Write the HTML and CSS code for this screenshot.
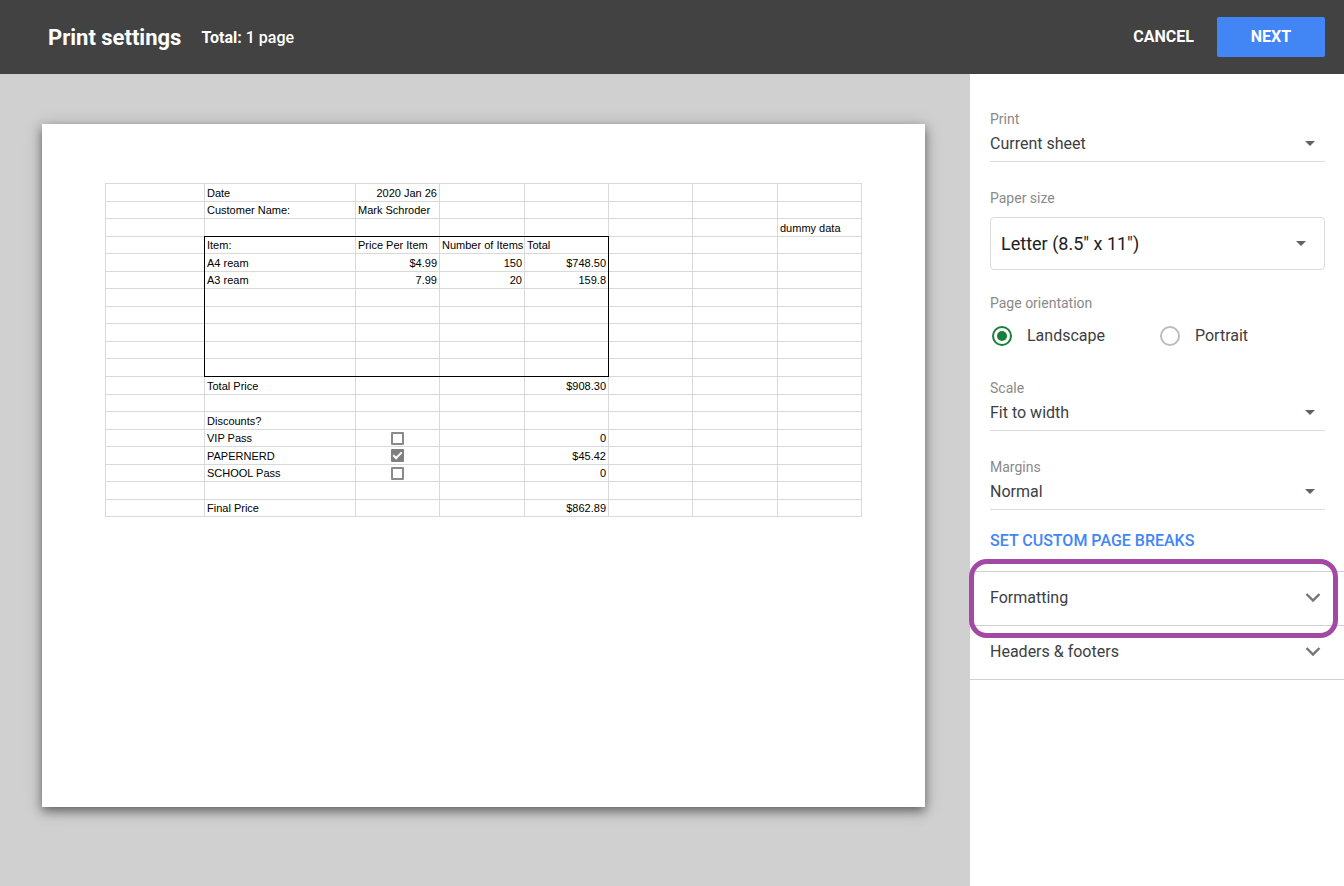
FILE: index.html
```html
<!DOCTYPE html>
<html lang="en">
<head>
    <meta charset="UTF-8">
    <meta name="viewport" content="width=device-width, initial-scale=1.0">
    <title>Print settings</title>
    <link rel="stylesheet" href="styles.css">
</head>
<body>
    <header class="topbar">
        <h1>Print settings</h1>
        <p class="total"><strong>Total:</strong> 1 page</p>
        <div class="actions">
            <button type="button" class="btn btn-cancel">CANCEL</button>
            <button type="button" class="btn btn-next">NEXT</button>
        </div>
    </header>

    <div class="layout">
        <main class="preview">
            <div class="paper">
                <table class="sheet">
                    <colgroup>
                        <col class="col-a">
                        <col class="col-b">
                        <col class="col-c">
                        <col class="col-d">
                        <col class="col-c">
                        <col class="col-c">
                        <col class="col-d">
                        <col class="col-c">
                    </colgroup>
                    <tbody class="order">
                        <tr><td></td><td>Date</td><td class="num">2020 Jan 26</td><td></td><td></td><td></td><td></td><td></td></tr>
                        <tr><td></td><td>Customer Name:</td><td>Mark Schroder</td><td></td><td></td><td></td><td></td><td></td></tr>
                        <tr><td></td><td></td><td></td><td></td><td></td><td></td><td></td><td>dummy data</td></tr>
                        <tr><td></td><td>Item:</td><td>Price Per Item</td><td>Number of Items</td><td>Total</td><td></td><td></td><td></td></tr>
                        <tr><td></td><td>A4 ream</td><td class="num">$4.99</td><td class="num">150</td><td class="num">$748.50</td><td></td><td></td><td></td></tr>
                        <tr><td></td><td>A3 ream</td><td class="num">7.99</td><td class="num">20</td><td class="num">159.8</td><td></td><td></td><td></td></tr>
                        <tr><td></td><td></td><td></td><td></td><td></td><td></td><td></td><td></td></tr>
                        <tr><td></td><td></td><td></td><td></td><td></td><td></td><td></td><td></td></tr>
                        <tr><td></td><td></td><td></td><td></td><td></td><td></td><td></td><td></td></tr>
                        <tr><td></td><td></td><td></td><td></td><td></td><td></td><td></td><td></td></tr>
                        <tr><td></td><td></td><td></td><td></td><td></td><td></td><td></td><td></td></tr>
                    </tbody>
                    <tbody>
                        <tr><td></td><td>Total Price</td><td></td><td></td><td class="num">$908.30</td><td></td><td></td><td></td></tr>
                        <tr><td></td><td></td><td></td><td></td><td></td><td></td><td></td><td></td></tr>
                        <tr><td></td><td>Discounts?</td><td></td><td></td><td></td><td></td><td></td><td></td></tr>
                        <tr><td></td><td><label for="vip">VIP Pass</label></td><td class="check"><input type="checkbox" id="vip"></td><td></td><td class="num">0</td><td></td><td></td><td></td></tr>
                        <tr><td></td><td><label for="papernerd">PAPERNERD</label></td><td class="check"><input type="checkbox" id="papernerd" checked></td><td></td><td class="num">$45.42</td><td></td><td></td><td></td></tr>
                        <tr><td></td><td><label for="school">SCHOOL Pass</label></td><td class="check"><input type="checkbox" id="school"></td><td></td><td class="num">0</td><td></td><td></td><td></td></tr>
                        <tr><td></td><td></td><td></td><td></td><td></td><td></td><td></td><td></td></tr>
                        <tr><td></td><td>Final Price</td><td></td><td></td><td class="num">$862.89</td><td></td><td></td><td></td></tr>
                    </tbody>
                </table>
            </div>
        </main>

        <aside class="sidebar">
            <form class="settings">
                <div class="field">
                    <label class="field-label" for="print">Print</label>
                    <div class="select">
                        <select id="print"><option>Current sheet</option></select>
                    </div>
                </div>

                <div class="field">
                    <label class="field-label" for="paper-size">Paper size</label>
                    <div class="select select-boxed">
                        <select id="paper-size"><option>Letter (8.5" x 11")</option></select>
                    </div>
                </div>

                <fieldset class="field orientation">
                    <legend class="field-label">Page orientation</legend>
                    <div class="radios">
                        <label class="radio"><input type="radio" name="orientation" value="landscape" checked><span>Landscape</span></label>
                        <label class="radio"><input type="radio" name="orientation" value="portrait"><span>Portrait</span></label>
                    </div>
                </fieldset>

                <div class="field">
                    <label class="field-label" for="scale">Scale</label>
                    <div class="select">
                        <select id="scale"><option>Fit to width</option></select>
                    </div>
                </div>

                <div class="field">
                    <label class="field-label" for="margins">Margins</label>
                    <div class="select">
                        <select id="margins"><option>Normal</option></select>
                    </div>
                </div>

                <a class="breaks" href="#">SET CUSTOM PAGE BREAKS</a>
            </form>

            <div class="sections">
                <button type="button" class="section highlighted">
                    Formatting
                    <svg class="chevron" width="16" height="10" viewBox="0 0 16 10"><path d="M1.5 1L8 7.5L14.5 1" fill="none" stroke="#757575" stroke-width="2.4"/></svg>
                </button>
                <button type="button" class="section">
                    Headers &amp; footers
                    <svg class="chevron" width="16" height="10" viewBox="0 0 16 10"><path d="M1.5 1L8 7.5L14.5 1" fill="none" stroke="#757575" stroke-width="2.4"/></svg>
                </button>
            </div>
        </aside>
    </div>
</body>
</html>
```
FILE: styles.css
```css
* {
    box-sizing: border-box;
}

body {
    margin: 0;
    min-height: 100vh;
    display: flex;
    flex-direction: column;
    font-family: Roboto, Arial, sans-serif;
    font-size: 16px;
    color: #3c4043;
}

button, select {
    font: inherit;
    color: inherit;
    border: 0;
    background: none;
    cursor: pointer;
}

/* Top bar */
.topbar {
    display: flex;
    align-items: center;
    height: 74px;
    padding: 0 19px 0 48px;
    background-color: #424242;
    color: #fff;
}

.topbar h1 {
    margin: 0;
    font-size: 22px;
    font-weight: 700;
}

.total {
    margin: 0 0 0 20px;
    font-weight: 500;
}

.total strong {
    font-weight: 700;
}

.actions {
    display: flex;
    margin-left: auto;
}

.btn {
    height: 40px;
    padding: 0 23px 2px;
    font-weight: 700;
    border-radius: 2px;
}

.btn-next {
    width: 108px;
    background-color: #4285f4;
}

.layout {
    flex: 1;
    display: grid;
    grid-template-columns: 1fr 374px;
}

/* Page preview */
.preview {
    padding: 50px 45px 50px 42px;
    background-color: #d0d0d0;
}

.paper {
    aspect-ratio: 128 / 99;
    padding: 59px 63px;
    background-color: #fff;
    box-shadow: 0 4px 10px rgba(0, 0, 0, 0.5), 0 2px 20px rgba(0, 0, 0, 0.1);
}

.sheet {
    width: 100%;
    table-layout: fixed;
    border-collapse: collapse;
    font-family: Arial, "Liberation Sans", sans-serif;
    font-size: 11px;
    line-height: 14px;
    color: #000;
}

.col-a { width: 99px; }
.col-b { width: 151px; }
.col-c { width: 84px; }
.col-d { width: 85px; }

.sheet tr {
    height: 18px;
}

.sheet tr:nth-child(even) {
    height: 17px;
}

.sheet td {
    padding: 0 2px;
    border: 1px solid #d9d9d9;
    white-space: nowrap;
}

.sheet .num {
    text-align: right;
}

.sheet .check {
    padding: 0;
    text-align: center;
}

/* black frame around the items, double wins over the solid grid where they cross */
.order tr:nth-child(3) td:nth-child(n+2):nth-child(-n+5),
.order tr:nth-child(11) td:nth-child(n+2):nth-child(-n+5) {
    border-bottom: 1px double #000;
}

.order tr:nth-child(n+4) td:nth-child(1),
.order tr:nth-child(n+4) td:nth-child(5) {
    border-right: 1px double #000;
}

.check input {
    appearance: none;
    display: block;
    width: 13px;
    height: 13px;
    margin: 0 auto;
    border: 2px solid #8a8a8a;
    border-radius: 1px;
}

.check input:checked {
    background-color: #808080;
    border-color: #808080;
}

.check input:checked::after {
    content: '';
    display: block;
    box-sizing: border-box;
    width: 9px;
    height: 5px;
    margin-top: 1px;
    border: solid #fff;
    border-width: 0 0 2px 2px;
    transform: rotate(-45deg);
}

/* Sidebar */
.sidebar {
    padding-top: 37px;
    background-color: #fff;
}

.settings {
    padding: 0 19px 0 20px;
}

.field {
    margin: 0 0 28px;
    padding: 0;
    border: 0;
}

.field-label {
    display: block;
    padding: 0;
    font-size: 14px;
    line-height: 16px;
    color: #8a8a8a;
}

.select {
    position: relative;
    border-bottom: 1px solid #dadce0;
}

.select::after {
    content: '';
    position: absolute;
    top: 14px;
    right: 10px;
    border: 5px solid transparent;
    border-top-color: #5f6368;
    border-bottom: 0;
    pointer-events: none;
}

.select select {
    appearance: none;
    display: block;
    width: 100%;
    height: 34px;
    padding: 0 0 2px;
}

.select-boxed {
    margin-top: 11px;
    border: 1px solid #dadce0;
    border-radius: 4px;
}

.select-boxed::after {
    top: 23px;
    right: 18px;
}

.select-boxed select {
    height: 51px;
    padding: 0 10px;
    font-size: 18px;
    color: #202124;
}

.orientation {
    margin: -3px 0 32px;
}

.radios {
    display: grid;
    grid-template-columns: 168px 1fr;
    padding: 13px 2px 0;
}

.radio {
    display: flex;
    align-items: center;
    gap: 15px;
    height: 24px;
}

.radio span {
    padding-bottom: 2px;
}

.radio input {
    appearance: none;
    width: 20px;
    height: 20px;
    margin: 0;
    border: 2px solid #bdbdbd;
    border-radius: 50%;
}

.radio input:checked {
    border-color: #188038;
    background: #188038 content-box;
    padding: 3px;
}

.breaks {
    display: block;
    margin-top: -7px;
    line-height: 20px;
    font-weight: 500;
    color: #4285f4;
    text-decoration: none;
}

.sections {
    margin-top: 20px;
    border-bottom: 1px solid #d0d0d0;
}

.section {
    position: relative;
    display: flex;
    align-items: center;
    justify-content: space-between;
    width: 100%;
    height: 54px;
    padding: 0 23px 2px 20px;
    border-top: 1px solid #d0d0d0;
}

.highlighted::after {
    content: '';
    position: absolute;
    inset: -13px 6px -13px -1px;
    border: 5px solid #a349a4;
    border-radius: 18px;
    z-index: 1;
    pointer-events: none;
}
```
